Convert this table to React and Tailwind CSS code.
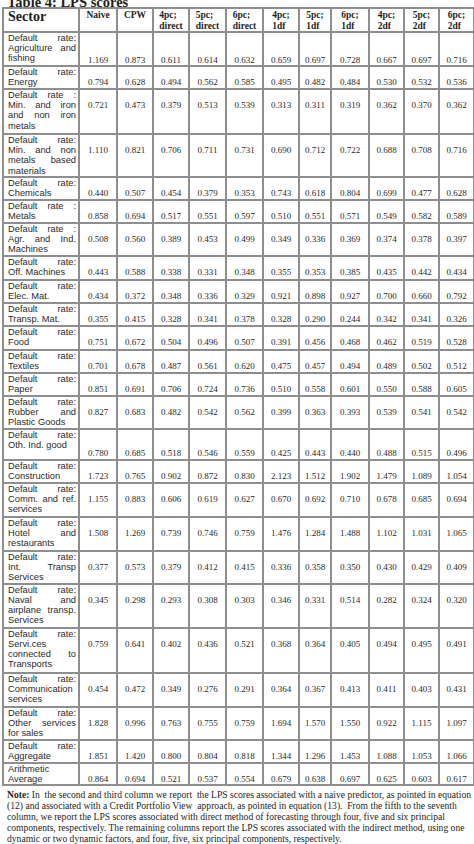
const widths = [
  "w-[76px]", "w-[38px]", "w-[36px]", "w-[36px]", "w-[37px]", "w-[37px]",
  "w-[36px]", "w-[32px]", "w-[38px]", "w-[35px]", "w-[35px]", "w-[35px]",
];

const heads = [
  ["Naive"], ["CPW"],
  ["4pc;", "direct"], ["5pc;", "direct"], ["6pc;", "direct"],
  ["4pc;", "1df"], ["5pc;", "1df"], ["6pc;", "1df"],
  ["4pc;", "2df"], ["5pc;", "2df"], ["6pc;", "2df"],
];

const rows = [
  { h: "h-[34px]", bottom: true, label: ["Default rate:", "Agriculture and", "fishing"], v: "1.169 0.873 0.611 0.614 0.632 0.659 0.697 0.728 0.667 0.697 0.716" },
  { h: "h-[23px]", label: ["Default rate:", "Energy"], v: "0.794 0.628 0.494 0.562 0.585 0.495 0.482 0.484 0.530 0.532 0.536" },
  { h: "h-[45px]", label: ["Default rate :", "Min. and iron", "and non iron", "metals"], v: "0.721 0.473 0.379 0.513 0.539 0.313 0.311 0.319 0.362 0.370 0.362" },
  { h: "h-[43px]", label: ["Default rate:", "Min. and non", "metals based", "materials"], v: "1.110 0.821 0.706 0.711 0.731 0.690 0.712 0.722 0.688 0.708 0.716" },
  { h: "h-[23px]", label: ["Default rate:", "Chemicals"], v: "0.440 0.507 0.454 0.379 0.353 0.743 0.618 0.804 0.699 0.477 0.628" },
  { h: "h-[23px]", label: ["Default rate :", "Metals"], v: "0.858 0.694 0.517 0.551 0.597 0.510 0.551 0.571 0.549 0.582 0.589" },
  { h: "h-[32px]", label: ["Default rate :", "Agr. and Ind.", "Machines"], v: "0.508 0.560 0.389 0.453 0.499 0.349 0.336 0.369 0.374 0.378 0.397" },
  { h: "h-[24px]", label: ["Default rate:", "Off. Machines"], v: "0.443 0.588 0.338 0.331 0.348 0.355 0.353 0.385 0.435 0.442 0.434" },
  { h: "h-[23px]", label: ["Default rate:", "Elec. Mat."], v: "0.434 0.372 0.348 0.336 0.329 0.921 0.898 0.927 0.700 0.660 0.792" },
  { h: "h-[23px]", label: ["Default rate:", "Transp. Mat."], v: "0.355 0.415 0.328 0.341 0.378 0.328 0.290 0.244 0.342 0.341 0.326" },
  { h: "h-[24px]", label: ["Default rate:", "Food"], v: "0.751 0.672 0.504 0.496 0.507 0.391 0.456 0.468 0.462 0.519 0.528" },
  { h: "h-[23px]", label: ["Default rate:", "Textiles"], v: "0.701 0.678 0.487 0.561 0.620 0.475 0.457 0.494 0.489 0.502 0.512" },
  { h: "h-[23px]", label: ["Default rate:", "Paper"], v: "0.851 0.691 0.706 0.724 0.736 0.510 0.558 0.601 0.550 0.588 0.605" },
  { h: "h-[33px]", label: ["Default rate:", "Rubber and", "Plastic Goods"], v: "0.827 0.683 0.482 0.542 0.562 0.399 0.363 0.393 0.539 0.541 0.542" },
  { h: "h-[31px]", bottom: true, label: ["Default rate:", "Oth. Ind. good"], v: "0.780 0.685 0.518 0.546 0.559 0.425 0.443 0.440 0.488 0.515 0.496" },
  { h: "h-[23px]", label: ["Default rate:", "Construction"], v: "1.723 0.765 0.902 0.872 0.830 2.123 1.512 1.902 1.479 1.089 1.054" },
  { h: "h-[34px]", label: ["Default rate:", "Comm. and ref.", "services"], v: "1.155 0.883 0.606 0.619 0.627 0.670 0.692 0.710 0.678 0.685 0.694" },
  { h: "h-[34px]", label: ["Default rate:", "Hotel and", "restaurants"], v: "1.508 1.269 0.739 0.746 0.759 1.476 1.284 1.488 1.102 1.031 1.065" },
  { h: "h-[33px]", label: ["Default rate:", "Int. Transp", "Services"], v: "0.377 0.573 0.379 0.412 0.415 0.336 0.358 0.350 0.430 0.429 0.409" },
  { h: "h-[44px]", label: ["Default rate:", "Naval and", "airplane transp.", "Services"], v: "0.345 0.298 0.293 0.308 0.303 0.346 0.331 0.514 0.282 0.324 0.320" },
  { h: "h-[45px]", label: ["Default rate:", "Servi.ces", "connected to", "Transports"], v: "0.759 0.641 0.402 0.436 0.521 0.368 0.364 0.405 0.494 0.495 0.491" },
  { h: "h-[34px]", label: ["Default rate:", "Communication", "services"], v: "0.454 0.472 0.349 0.276 0.291 0.364 0.367 0.413 0.411 0.403 0.431" },
  { h: "h-[33px]", label: ["Default rate:", "Other services", "for sales"], v: "1.828 0.996 0.763 0.755 0.759 1.694 1.570 1.550 0.922 1.115 1.097" },
  { h: "h-[23px]", label: ["Default rate:", "Aggregate"], v: "1.851 1.420 0.800 0.804 0.818 1.344 1.296 1.453 1.088 1.053 1.066" },
  { h: "h-[22px]", label: ["Arithmetic", "Average"], v: "0.864 0.694 0.521 0.537 0.554 0.679 0.638 0.697 0.625 0.603 0.617" },
];

const cell = "border-2 border-[#8e8e8e] p-0";

export default function App() {
  return (
    <div className="w-[474px] min-h-screen bg-white text-[#1e1e1e] overflow-hidden">
      <div className="-mt-[4px] h-[11px] pl-[7px] font-['Liberation_Serif','Times_New_Roman',serif] font-bold text-[14.5px] leading-[12px]">
        Table 4: LPS scores
      </div>

      <table className="ml-[2px] w-[471px] table-fixed border-collapse">
        <colgroup>
          {widths.map((w, i) => (
            <col key={i} className={w} />
          ))}
        </colgroup>
        <thead>
          <tr className="h-[24px]">
            <th className={`${cell} align-top text-left pl-[4px] font-['Liberation_Serif','Times_New_Roman',serif] font-bold text-[14px] leading-[16px]`}>
              <div>Sector</div>
            </th>
            {heads.map((h, i) => (
              <th
                key={i}
                className={`${cell} align-top pt-[1px] font-['Liberation_Serif','Times_New_Roman',serif] font-bold text-[9.5px] leading-[10.5px]`}
              >
                <div className="flex justify-center">
                  <div className="text-left">
                    {h.map((t) => (
                      <div key={t}>{t}</div>
                    ))}
                  </div>
                </div>
              </th>
            ))}
          </tr>
        </thead>
        <tbody>
          {rows.map((r, ri) => (
            <tr key={ri} className={r.h}>
              <td className={`${cell} align-top pl-[4px] pr-[2px] font-['Liberation_Sans',Arial,sans-serif] text-[9.3px] leading-[10.2px] text-[#2a2a2a]`}>
                {r.label.map((t, i) => (
                  <div
                    key={i}
                    className={i < r.label.length - 1 ? "text-justify [text-align-last:justify]" : "text-left"}
                  >
                    {t}
                  </div>
                ))}
              </td>
              {r.v.split(" ").map((n, i) => (
                <td
                  key={i}
                  className={`${cell} text-center font-['Liberation_Serif','Times_New_Roman',serif] text-[9px] leading-[10.2px] text-[#2a2a2a] ${
                    r.bottom ? "align-bottom" : "align-top pt-[10.2px]"
                  }`}
                >
                  {n}
                </td>
              ))}
            </tr>
          ))}
        </tbody>
      </table>

      <div className="pl-[7px] pt-[3px] font-['Liberation_Serif','Times_New_Roman',serif] text-[9.6px] leading-[11px] text-[#1e1e1e]">
        <div className="whitespace-nowrap">
          <b>Note:</b> In&nbsp; the second and third column we report&nbsp; the LPS scores associated with a naive predictor, as pointed in equation
        </div>
        <div className="whitespace-nowrap">
          (12) and associated with a Credit Portfolio View&nbsp; approach, as pointed in equation (13).&nbsp; From the fifth to the seventh
        </div>
        <div className="whitespace-nowrap">
          column, we report the LPS scores associated with direct method of forecasting through four, five and six principal
        </div>
        <div className="whitespace-nowrap">
          components, respectively. The remaining columns report the LPS scores associated with the indirect method, using one
        </div>
        <div className="whitespace-nowrap">
          dynamic or two dynamic factors, and four, five, six principal components, respectively.
        </div>
      </div>
    </div>
  );
}
